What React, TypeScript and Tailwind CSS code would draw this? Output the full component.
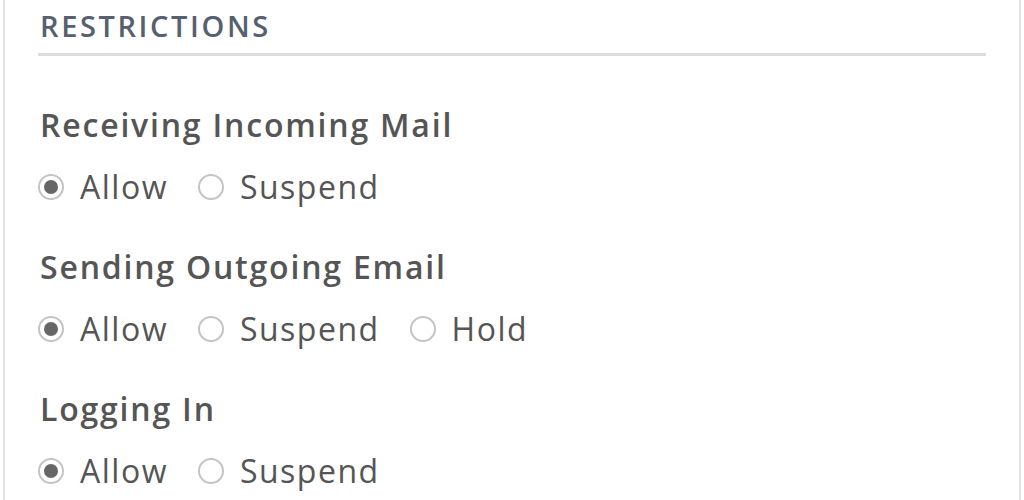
const groups = [
  { label: 'Receiving Incoming Mail', options: ['Allow', 'Suspend'] },
  { label: 'Sending Outgoing Email', options: ['Allow', 'Suspend', 'Hold'] },
  { label: 'Logging In', options: ['Allow', 'Suspend'] },
];

const Radio = ({ checked }: { checked: boolean }) => (
  <span className="flex h-[26px] w-[26px] shrink-0 items-center justify-center rounded-full border-2 border-[#c4c4c4] bg-white">
    {checked && <span className="h-[14px] w-[14px] rounded-full bg-[#666]" />}
  </span>
);

export default function App() {
  return (
    <div className="h-[500px] w-[1024px] overflow-hidden bg-white" style={{ fontFamily: '"Open Sans", sans-serif' }}>
      <div className="ml-[3px] h-full w-[1018px] border-x-2 border-[#e3e3e3] pl-[35px] pr-[32px]">
        <h3 className="pt-[6px] text-[29px] font-semibold leading-[40px] tracking-[0.09em] text-[#56606e]">RESTRICTIONS</h3>
        <div className="mt-[7px] h-[3px] w-[948px] -ml-[2px] bg-[#dddddd]" />
        <div className="mt-[47px] flex flex-col gap-[36px]">
          {groups.map((g) => (
            <div key={g.label}>
              <div className="text-[32px] font-semibold leading-[44px] tracking-[1.8px] text-[#555555]">{g.label}</div>
              <div className="mt-[18px] -ml-[2px] flex items-center gap-[30px]">
                {g.options.map((o, oi) => (
                  <label key={o} className="flex items-center gap-[16px] text-[32px] leading-[44px] tracking-[1.5px] text-[#555555]">
                    <Radio checked={oi === 0} />
                    <span>{o}</span>
                  </label>
                ))}
              </div>
            </div>
          ))}
        </div>
      </div>
    </div>
  );
}
